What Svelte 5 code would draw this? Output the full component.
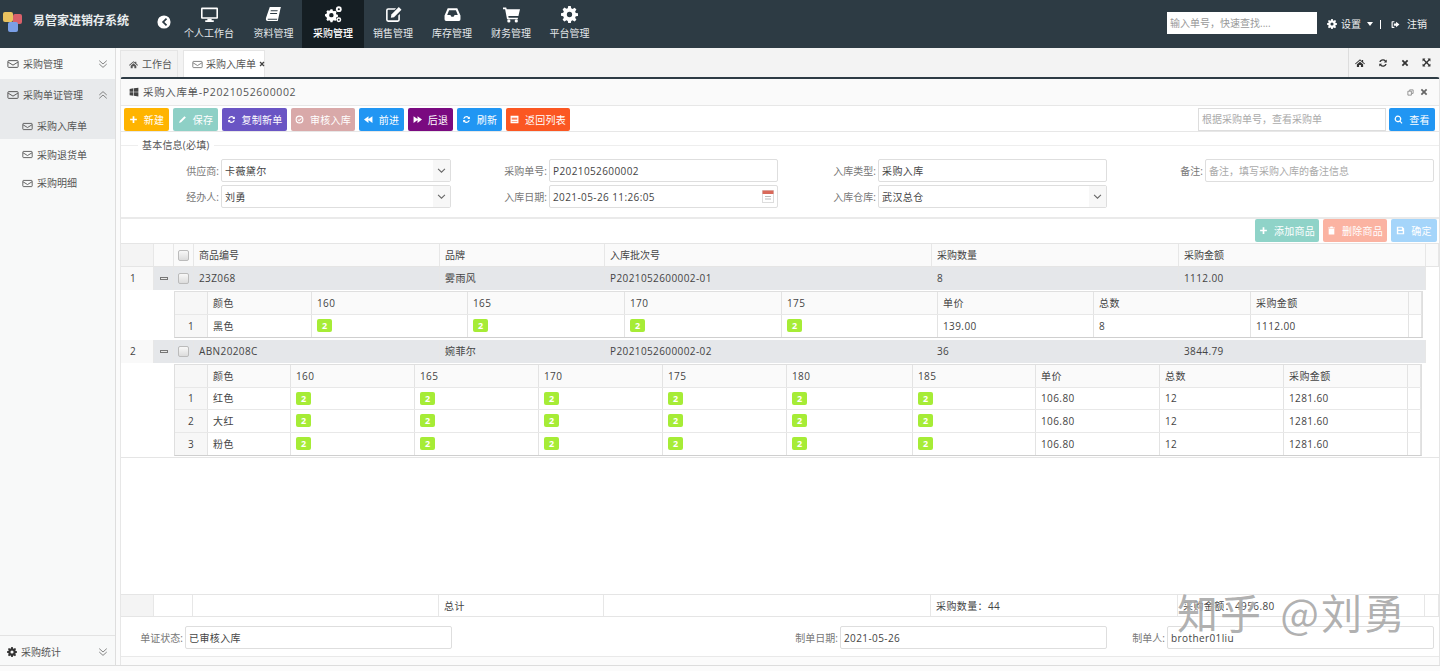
<script>
  const nav = [
    ['个人工作台','monitor'],['资料管理','book'],['采购管理','gears'],['销售管理','edit'],
    ['库存管理','inbox'],['财务管理','cart'],['平台管理','gear']
  ];
  const btns = [
    ['新建','plus','#ffb400',45],['保存','pencil','#8ed0c6',45],['复制新单','refresh','#6a55c4',65],['审核入库','check','#d9a9a9',64],
    ['前进','back','#2196f3',45],['后退','fwd','#7a0a80',45],['刷新','refresh','#2196f3',45],['返回列表','list','#fb5722',64]
  ];
  const sub1Cols = '33px 104px 156px 157px 157px 156px 156px 157px 158px 1fr';
  const sub2Cols = '33px 83px 124px 124px 124px 124px 126px 123px 124px 124px 124px 1fr';
  const sub1Sizes = ['160','165','170','175'];
  const sub2Sizes = ['160','165','170','175','180','185'];
  const sub2Rows = [['1','红色'],['2','大红'],['3','粉色']];
  const main = [
    { idx: '1', code: '23Z068', brand: '雾雨风', batch: 'P2021052600002-01', qty: '8', amt: '1112.00' },
    { idx: '2', code: 'ABN20208C', brand: '婉菲尔', batch: 'P2021052600002-02', qty: '36', amt: '3844.79' }
  ];
</script>

{#snippet icon(name, size = 12, color = 'currentColor')}
  <svg class="ic" width={size} height={size} viewBox="0 0 16 16" fill={color} stroke="none" aria-hidden="true">
    {#if name === 'monitor'}
      <path fill-rule="evenodd" d="M1 1.500h14a1 1 0 0 1 1 1v8.500a1 1 0 0 1-1 1H1a1 1 0 0 1-1-1V2.500a1 1 0 0 1 1-1zM1.500 3v7.500h13V3z"/><path d="M6 12h4v1.500h2V15H4v-1.500h2z"/>
    {:else if name === 'book'}
      <path d="M4.500 1H15l-.5 1.500-2.500 11.500H2.500C1 14 .500 12.500 1 11zM5.500 4l-.3 1h6.500l.3-1zM5 6.500l-.3 1h6.500l.3-1zM2.500 12.200c0 .5.3.800 1 .800h7.800l.3-1H3.200c-.4 0-.7 0-.7.200z" fill-rule="evenodd"/>
    {:else if name === 'gears'}
      <path fill-rule="evenodd" d="M6 3l1 .1.400 1.400 1 .5 1.300-.6 1.200 1.200-.6 1.300.5 1 1.400.4v1.800l-1.400.4-.5 1 .6 1.300-1.200 1.200-1.300-.6-1 .5-.4 1.400H5.200l-.4-1.400-1-.5-1.300.6-1.200-1.200.6-1.300-.5-1L0 9.500V7.800l1.400-.4.500-1-.6-1.300 1.200-1.200 1.300.6 1-.5L5.200 3zM6 6.500a2.100 2.100 0 1 0 0 4.200 2.100 2.100 0 0 0 0-4.200z"/><circle cx="13" cy="3" r="2.700"/><circle cx="13" cy="13" r="2.300"/><circle cx="13" cy="3" r="1" fill="#151e23"/><circle cx="13" cy="13" r=".9" fill="#151e23"/>
    {:else if name === 'edit'}
      <path d="M3 2h7.500L9 3.500H3a.6.6 0 0 0-.5.500v9a.6.6 0 0 0 .5.500h9a.6.6 0 0 0 .5-.5V9L14 7.500V13a2 2 0 0 1-2 2H3a2 2 0 0 1-2-2V4a2 2 0 0 1 2-2z"/><path d="M13 1l2.500 2.500L8.500 10.500 5.500 11l.5-3z"/>
    {:else if name === 'inbox'}
      <path fill-rule="evenodd" d="M3.500 2h9l3 7v3.500a1.500 1.500 0 0 1-1.500 1.500H2a1.500 1.500 0 0 1-1.500-1.500V9zM4.800 4L3 8.500h3l1 1.500h2l1-1.500h3L11.200 4z"/>
    {:else if name === 'cart'}
      <path d="M0 1.500h3l.5 1.500H16l-1.500 6.500H5l.3 1.500H14v1.500H3.800L2 3H0z"/><circle cx="5.500" cy="14" r="1.500"/><circle cx="12.500" cy="14" r="1.500"/>
    {:else if name === 'gear'}
      <path fill-rule="evenodd" d="M6.800 0h2.400l.4 2.200 1.300.6 1.900-1.200 1.700 1.700-1.200 1.900.6 1.300 2.100.4v2.400l-2.100.4-.6 1.300 1.200 1.900-1.700 1.700-1.900-1.200-1.300.6-.4 2.200H6.800l-.4-2.200-1.300-.6-1.900 1.200-1.700-1.700 1.200-1.900-.6-1.300L0 9.200V6.800l2.100-.4.600-1.300-1.200-1.900 1.700-1.700 1.900 1.200 1.300-.6zM8 5.500a2.500 2.500 0 1 0 0 5 2.500 2.500 0 0 0 0-5z"/>
    {:else if name === 'plus'}
      <path d="M6.500 2h3v4.500H14v3H9.500V14h-3V9.500H2v-3h4.500z"/>
    {:else if name === 'pencil'}
      <path d="M11.500 2L14 4.500 5.500 13 2 14l1-3.500z"/>
    {:else if name === 'refresh'}
      <path d="M8 2a6 6 0 0 1 4.500 2L14 2.500V7H9.500l1.500-1.500A4 4 0 0 0 4.300 6.500H2.100A6 6 0 0 1 8 2zM2 9h4.500L5 10.500a4 4 0 0 0 6.700-1h2.200A6 6 0 0 1 3.500 12L2 13.500z"/>
    {:else if name === 'check'}
      <path fill-rule="evenodd" d="M8 1a7 7 0 1 1 0 14A7 7 0 0 1 8 1zm0 2a5 5 0 1 0 0 10A5 5 0 0 0 8 3zm3 2.500l1 1L7 11 4.500 8.500l1-1L7 9z"/>
    {:else if name === 'back'}
      <path d="M8 2v5L15 2v12L8 9v5L0 8z"/>
    {:else if name === 'fwd'}
      <path d="M8 2v5L1 2v12l7-5v5l8-6z"/>
    {:else if name === 'list'}
      <path fill-rule="evenodd" d="M1 1.500h14v13H1zM3 5v1.500h10V5zm0 3v1h10V8zm0 2.500v1h10v-1z"/>
    {:else if name === 'mail'}
      <path fill="none" stroke={color} stroke-width="1.300" d="M2.200 3.500h11.600a1 1 0 0 1 1 1v7a1 1 0 0 1-1 1H2.200a1 1 0 0 1-1-1v-7a1 1 0 0 1 1-1zM1.500 5.500L8 9.500l6.500-4"/>
    {:else if name === 'home'}
      <path d="M8 2l3 2.600V3h2v3.300L16 9l-1 1-7-6-7 6-1-1zM3 10l5-4.200L13 10v4.500H9.500V11h-3v3.500H3z"/>
    {:else if name === 'close'}
      <path d="M4 1.500L8 5.500l4-4L14.500 4l-4 4 4 4-2.500 2.500-4-4-4 4L1.500 12l4-4-4-4z"/>
    {:else if name === 'expand'}
      <path d="M1 1h5L4.600 2.900 8 6.100l3.400-3.200L10 1h5v5l-1.900-1.400L9.900 8l3.200 3.400L15 10v5h-5l1.400-1.900L8 9.900l-3.400 3.200L6 15H1v-5l1.900 1.400L6.100 8 2.900 4.600 1 6z"/>
    {:else if name === 'windows'}
      <path d="M1 3l6-.9V7.500H1zM8 2l7-1v6.500H8zM1 8.500h6V14l-6-.9zM8 8.500h7V15l-7-1z"/>
    {:else if name === 'restore'}
      <path fill="none" stroke={color} stroke-width="1.500" d="M6 4V2h8v8h-3M2 5h8v9H2z"/>
    {:else if name === 'search'}
      <path fill-rule="evenodd" d="M7 1a6 6 0 0 1 4.700 9.700l3.300 3.300-1.400 1.400-3.300-3.300A6 6 0 1 1 7 1zm0 2.200a3.800 3.800 0 1 0 0 7.600 3.800 3.800 0 0 0 0-7.600z"/>
    {:else if name === 'logout'}
      <path d="M6 2H2a1 1 0 0 0-1 1v10a1 1 0 0 0 1 1h4v-2H3V4h3z"/><path d="M9 3l6 5-6 5v-3H5V6h4z"/>
    {:else if name === 'trash'}
      <path d="M6 1h4l.5 1.500H14V4H2V2.500h3.500zM3 5h10v10H3z"/>
    {:else if name === 'save'}
      <path fill-rule="evenodd" d="M1.500 1.500h10l3 3v10h-13zM4 3v3.500h6.500V3zm0 6v4h8V9z"/>
    {:else if name === 'left'}
      <path fill-rule="evenodd" d="M8 .5a7.500 7.500 0 1 1 0 15 7.500 7.500 0 0 1 0-15zM10.200 3.400L5.600 8l4.600 4.600 1.400-1.400L8.400 8l3.200-3.200-1.400-1.400z"/>
    {:else if name === 'dchev'}
      <path fill="none" stroke={color} stroke-width="1.200" d="M3 3.500l5 4.500 5-4.500M3 8l5 4.500 5-4.500"/>
    {:else if name === 'uchev'}
      <path fill="none" stroke={color} stroke-width="1.200" d="M3 8l5-4.500L13 8M3 12.500L8 8l5 4.500"/>
    {:else if name === 'chev'}
      <path fill="none" stroke={color} stroke-width="1.500" d="M3 5.500l5 5 5-5"/>
    {/if}
  </svg>
{/snippet}

{#snippet badge()}<span class="badge">2</span>{/snippet}

<div class="page">
  <header class="top">
    <div class="brand">
      <svg class="logo" width="20" height="20" viewBox="0 0 20 20" aria-hidden="true">
        <rect x="0" y="0" width="10" height="10" rx="2" fill="#e9c25f"/>
        <rect x="10" y="2" width="9" height="10" rx="2" fill="#d9606a"/>
        <rect x="5" y="10" width="10" height="10" rx="2" fill="#7a9fe6"/>
      </svg>
      <span class="brand-name">易管家进销存系统</span>
    </div>
    <span class="collapse">{@render icon('left', 14, '#fff')}</span>
    <nav class="nav">
      {#each nav as [label, ic], i}
        <div class="nav-item" class:active={i === 2}>
          {@render icon(ic, 17, '#fff')}
          <span>{label}</span>
        </div>
      {/each}
    </nav>
    <div class="top-right">
      <div class="quick">输入单号，快速查找....</div>
      {@render icon('gear', 10, '#fff')}<span class="tr-t">设置</span><span class="caret"></span><span class="bar"></span>
      {@render icon('logout', 9, '#fff')}<span class="tr-t out">注销</span>
    </div>
  </header>

  <div class="body">
    <aside class="side">
      <div class="s-row s-head">{@render icon('mail', 12, '#555')}<span>采购管理</span>{@render icon('dchev', 12, '#777')}</div>
      <div class="s-row s-head open">{@render icon('mail', 12, '#555')}<span>采购单证管理</span>{@render icon('uchev', 12, '#777')}</div>
      <div class="s-row s-sub open">{@render icon('mail', 11, '#555')}<span>采购入库单</span></div>
      <div class="s-row s-sub">{@render icon('mail', 11, '#555')}<span>采购退货单</span></div>
      <div class="s-row s-sub">{@render icon('mail', 11, '#555')}<span>采购明细</span></div>
      <div class="s-row s-head s-bottom">{@render icon('gear', 10, '#333')}<span>采购统计</span>{@render icon('dchev', 12, '#777')}</div>
    </aside>

    <main class="content">
      <div class="tabs">
        <div class="tab">{@render icon('home', 9, '#555')}<span>工作台</span></div>
        <div class="tab cur">{@render icon('mail', 11, '#777')}<span>采购入库单</span>{@render icon('close', 6, '#444')}</div>
        <div class="tab-tools">
          {@render icon('home', 10, '#333')}{@render icon('refresh', 10, '#333')}{@render icon('close', 8, '#333')}{@render icon('expand', 9, '#333')}
        </div>
      </div>

      <section class="panel">
        <div class="p-title">
          {@render icon('windows', 10, '#444')}<span>采购入库单-P2021052600002</span>
          <div class="p-tools">{@render icon('restore', 7, '#666')}{@render icon('close', 8, '#666')}</div>
        </div>

        <div class="toolbar">
          {#each btns as [label, ic, bg, w]}
            <div class="btn" style="background:{bg};width:{w}px">{@render icon(ic, 9, '#fff')}<span>{label}</span></div>
          {/each}
          <div class="search">
            <div class="search-in">根据采购单号，查看采购单</div>
            <div class="btn find">{@render icon('search', 9, '#fff')}<span>查看</span></div>
          </div>
        </div>

        <div class="legend"><span>基本信息(必填)</span></div>

        <div class="form">
          <label class="lbl">供应商:</label><div class="in sel">卡薇黛尔<i>{@render icon('chev', 11, '#666')}</i></div>
          <label class="lbl">采购单号:</label><div class="in">P2021052600002</div>
          <label class="lbl">入库类型:</label><div class="in">采购入库</div>
          <label class="lbl">备注:</label><div class="in ph">备注，填写采购入库的备注信息</div>

          <label class="lbl">经办人:</label><div class="in sel">刘勇<i>{@render icon('chev', 11, '#666')}</i></div>
          <label class="lbl">入库日期:</label>
          <div class="in date">2021-05-26 11:26:05
            <svg width="12" height="14" viewBox="0 0 12 14" aria-hidden="true"><rect x=".5" y="1.500" width="11" height="12" fill="#fff" stroke="#ddd"/><rect x=".5" y="1.500" width="11" height="3.500" fill="#d9695a"/><path d="M3 7.500h6M3 10h6" stroke="#bbb"/></svg>
          </div>
          <label class="lbl">入库仓库:</label><div class="in sel">武汉总仓<i>{@render icon('chev', 11, '#666')}</i></div>
        </div>

        <div class="actions">
          <div class="btn" style="background:#8fd3c8;width:64px">{@render icon('plus', 9, '#fff')}<span>添加商品</span></div>
          <div class="btn" style="background:#fbb3a2;width:64px">{@render icon('trash', 9, '#fff')}<span>删除商品</span></div>
          <div class="btn" style="background:#a5d5fa;width:46px">{@render icon('save', 9, '#fff')}<span>确定</span></div>
        </div>

        <div class="grid">
          <div class="row head">
            <div class="c gray"></div><div class="c"></div><div class="c ctr"><span class="chk"></span></div>
            <div class="c">商品编号</div><div class="c">品牌</div><div class="c">入库批次号</div><div class="c">采购数量</div><div class="c">采购金额</div><div class="c"></div>
          </div>

          {#each main as m, i}
            <div class="row item">
              <div class="c idx">{m.idx}</div><div class="c ctr"><span class="minus"></span></div><div class="c ctr"><span class="chk"></span></div>
              <div class="c">{m.code}</div><div class="c">{m.brand}</div><div class="c">{m.batch}</div><div class="c">{m.qty}</div><div class="c">{m.amt}</div><div class="c tail"></div>
            </div>
            {#if i === 0}
              <div class="detail first">
                <div class="sub">
                  <div class="s-line s-h" style="grid-template-columns:{sub1Cols}">
                    <div class="d no"></div><div class="d">颜色</div>
                    {#each sub1Sizes as s}<div class="d">{s}</div>{/each}
                    <div class="d">单价</div><div class="d">总数</div><div class="d">采购金额</div><div class="d"></div>
                  </div>
                  <div class="s-line" style="grid-template-columns:{sub1Cols}">
                    <div class="d no r">1</div><div class="d">黑色</div>
                    {#each sub1Sizes as s}<div class="d">{@render badge()}</div>{/each}
                    <div class="d">139.00</div><div class="d">8</div><div class="d">1112.00</div><div class="d"></div>
                  </div>
                </div>
              </div>
            {:else}
              <div class="detail second">
                <div class="sub">
                  <div class="s-line s-h" style="grid-template-columns:{sub2Cols}">
                    <div class="d no"></div><div class="d">颜色</div>
                    {#each sub2Sizes as s}<div class="d">{s}</div>{/each}
                    <div class="d">单价</div><div class="d">总数</div><div class="d">采购金额</div><div class="d"></div>
                  </div>
                  {#each sub2Rows as [n, color]}
                    <div class="s-line" style="grid-template-columns:{sub2Cols}">
                      <div class="d no r">{n}</div><div class="d">{color}</div>
                      {#each sub2Sizes as s}<div class="d">{@render badge()}</div>{/each}
                      <div class="d">106.80</div><div class="d">12</div><div class="d">1281.60</div><div class="d"></div>
                    </div>
                  {/each}
                </div>
              </div>
            {/if}
          {/each}

          <div class="spacer"></div>

          <div class="row foot">
            <div class="c gray"></div><div class="c"></div>
            <div class="c"></div><div class="c">总计</div><div class="c"></div><div class="c">采购数量：44</div><div class="c">采购金额：4956.80</div><div class="c"></div>
          </div>
        </div>

        <div class="bottom">
          <label class="lbl">单证状态:</label><div class="in">已审核入库</div>
          <label class="lbl">制单日期:</label><div class="in">2021-05-26</div>
          <label class="lbl">制单人:</label><div class="in">brother01liu</div>
        </div>
        <div class="strip"></div>
      </section>
    </main>
  </div>

  <div class="mark">知乎 @刘勇</div>
</div>

<style>
  :global(body) { margin: 0; background: #fbfbfb; }
  .page {
    position: relative; width: 1440px; height: 671px; overflow: hidden; display: flex; flex-direction: column;
    font: 10px/1.2 "Open Sans", "Noto Sans CJK SC", sans-serif; color: #555; letter-spacing: 0;
  }
  .ic { display: block; flex: none; }

  .top { height: 48px; flex: none; background: #2d3b44; display: flex; align-items: stretch; color: #fff; }
  .brand { width: 157px; flex: none; display: flex; align-items: center; gap: 10px; padding-left: 3px; box-sizing: border-box; padding-bottom: 5px; }
  .logo { flex: none; }
  .brand-name { font-size: 12px; font-weight: 700; color: #e9edef; white-space: nowrap; }
  .collapse { width: 18px; flex: none; display: flex; align-items: center; padding-bottom: 5px; }
  .nav { display: flex; }
  .nav-item { width: 50px; display: flex; flex-direction: column; align-items: center; gap: 4px; padding-top: 6px; box-sizing: border-box; color: #e4e8ea; white-space: nowrap; margin-left: 9px; }
  .nav-item:nth-child(1) { width: 68px; margin-left: 0; }
  .nav-item:nth-child(2) { margin-left: 5.500px; }
  .nav-item:nth-child(3) { width: 62px; margin-left: 3.500px; }
  .nav-item:nth-child(4) { margin-left: 4px; }
  .nav-item:nth-child(7) { margin-left: 8.500px; }
  .nav-item.active { background: #151e23; color: #fff; font-weight: 500; }
  .top-right { margin-left: auto; display: flex; align-items: center; padding-right: 13px; }
  .quick { width: 150px; height: 22px; margin: -2px 10px 0 0; box-sizing: border-box; background: #fff; color: #999; padding: 4px 3px; line-height: 14px; }
  .tr-t { margin-left: 4px; color: #f0f0f0; }
  .tr-t.out { margin-left: 7px; }
  .caret { border-top: 4px solid #fff; border-left: 3.500px solid transparent; border-right: 3.500px solid transparent; margin: 0 7px 0 6px; }
  .bar { width: 1px; height: 9px; background: #fff; margin-right: 10px; }

  .body { height: 617px; flex: none; display: flex; min-height: 0; border-bottom: 1px solid #ddd; }
  .side { width: 115px; flex: none; background: #f8f9f9; border-right: 1px solid #dedede; display: flex; flex-direction: column; }
  .s-row { display: flex; align-items: center; color: #555; white-space: nowrap; box-sizing: border-box; }
  .s-head { height: 31px; padding: 0 6px 0 7px; gap: 4px; flex: none; }
  .s-head span { flex: 1; }
  .s-sub { height: 29px; padding-left: 22px; gap: 4px; flex: none; }
  .s-row.s-sub:nth-child(3) { padding-top: 3px; }
  .s-row.s-sub:nth-child(4) { padding-top: 2px; }
  .s-row.s-sub:nth-child(5) { padding-top: 1px; }
  .open { background: #e8eaec; }
  .s-bottom { margin-top: auto; height: 30px; border-top: 1px solid #e3e3e3; padding-top: 3px; }

  .content { flex: 1; min-width: 0; margin-left: 4px; display: flex; flex-direction: column; background: #f3f3f4; }
  .tabs { height: 29px; flex: none; display: flex; align-items: flex-end; background: #f3f3f3; gap: 5px; position: relative; }
  .tab { width: 58px; height: 27px; box-sizing: border-box; display: flex; align-items: center; gap: 4px; padding: 0 8px; border: 1px solid #e5e5e5; border-bottom: 0; white-space: nowrap; }
  .tab.cur { width: 82px; background: #fff; gap: 3px; }
  .tab-tools { margin-left: auto; height: 29px; width: 92px; box-sizing: border-box; border-left: 1px solid #ddd; display: flex; align-items: center; gap: 13px; padding-left: 6px; }

  .panel { flex: 1; min-height: 0; background: #fff; border-top: 2px solid #2d3b44; border-radius: 3px 3px 0 0; display: flex; flex-direction: column; border-right: 1px solid #e5e5e5; border-left: 1px solid #e7e7e7; }
  .p-title { height: 27px; flex: none; box-sizing: border-box; display: flex; align-items: center; gap: 4px; padding: 0 11px 0 8px; background: #fafafa; border-bottom: 1px solid #e7e7e7; font-size: 10.500px; letter-spacing: .65px; }
  .p-tools { margin-left: auto; display: flex; gap: 6px; align-items: center; }
  .toolbar { height: 26px; flex: none; box-sizing: border-box; display: flex; align-items: center; gap: 4px; padding: 2px 4px 0 3px; border-bottom: 1px solid #e7e7e7; }
  .btn { height: 23px; flex: none; border-radius: 2px; box-sizing: border-box; color: #fff; display: flex; align-items: center; justify-content: center; gap: 6px; white-space: nowrap; letter-spacing: .2px; }
  .search { margin-left: auto; display: flex; gap: 3px; }
  .search-in { width: 188px; height: 23px; box-sizing: border-box; border: 1px solid #ddd; color: #aaa; padding: 4px 3px; }
  .find { width: 46px; background: #2196f3; }

  .legend { height: 24px; flex: none; box-sizing: border-box; padding: 2px 0 0 17px; position: relative; display: flex; align-items: center; }
  .legend::before { content: ""; position: absolute; left: 0; right: 0; top: 13px; border-top: 1px solid #eee; }
  .legend span { position: relative; background: #fff; padding: 0 4px; letter-spacing: .2px; }

  .form { height: 53px; margin: 3px 0 5px; flex: none; display: grid; grid-template-columns: 100px 230px 98px 229px 100px 229px 98px 229px; grid-auto-rows: 23px; row-gap: 3px; align-items: center; }
  .lbl { text-align: right; color: #777; padding-right: 2px; white-space: nowrap; }
  .in { height: 23px; box-sizing: border-box; border: 1px solid #dedede; border-radius: 2px; background: #fff; color: #444; padding: 0 3px; display: flex; align-items: center; white-space: nowrap; position: relative; letter-spacing: .4px; }
  .sel i { position: absolute; right: 0; top: 0; bottom: 0; width: 17px; background: #f7f7f7; display: flex; align-items: center; justify-content: center; }
  .date svg { position: absolute; right: 3px; top: 3px; }
  .ph { color: #aaa; letter-spacing: 0; }

  .actions { height: 26px; flex: none; box-sizing: border-box; display: flex; justify-content: flex-end; gap: 4px; align-items: flex-start; padding-right: 2px; border-top: 2px solid #eaeaea; }
  .grid { flex: 1; min-height: 0; display: flex; flex-direction: column; border-top: 1px solid #e5e5e5; }
  .row { display: grid; grid-template-columns: 33px 20px 20px 246px 165px 327px 247px 247px 1fr; flex: none; height: 23px; box-sizing: border-box; }
  .c { display: flex; align-items: center; padding-left: 5px; border-right: 1px solid #e7e7e7; white-space: nowrap; color: #444; min-width: 0; letter-spacing: .4px; }
  .ctr { justify-content: center; padding: 0; }
  .head { background: #fafafa; border-bottom: 1px solid #e5e5e5; }
  .head .c { letter-spacing: 0; }
  .gray { background: #f4f4f4; }
  .item { background: #e5e7ea; }
  .item .c { padding-bottom: 1px; }
  .item .tail { border-right: 0; background: #fff; }
  .idx { background: #f9f9f9; justify-content: center; padding: 0 8px 0 0; }
  .chk { width: 9px; height: 9px; border: 1px solid #bbb; border-radius: 2px; background: linear-gradient(#f8f8f8, #dcdcdc); }
  .minus { width: 8px; height: 3px; border: 1px solid #777; box-sizing: border-box; background: #e8e8e8; }

  .detail { flex: none; box-sizing: border-box; background: #fff; padding-left: 53px; }
  .detail.first { padding-top: 1px; padding-bottom: 2px; }
  .detail.second { padding-top: 1px; padding-bottom: 1px; border-bottom: 1px solid #e5e5e5; }
  .sub { width: 1249px; border: 1px solid #dfdfdf; border-bottom-color: #cfcfcf; box-sizing: border-box; }
  .second .sub { width: 1248px; }
  .s-line { display: grid; height: 22.500px; box-sizing: border-box; border-bottom: 1px solid #e8e8e8; }
  .s-line:last-child { border-bottom: 0; }
  .s-h { background: #fafafa; }
  .d { display: flex; align-items: center; padding-left: 5px; border-right: 1px solid #e3e3e3; white-space: nowrap; color: #444; min-width: 0; letter-spacing: .4px; }
  .no { background: #f7f7f7; padding-left: 0; }
  .no.r { justify-content: center; }
  .badge { display: inline-block; background: #a6ec36; color: #fff; font-weight: 700; font-size: 9px; line-height: 13px; height: 13px; width: 15px; text-align: center; border-radius: 2px; letter-spacing: 0; }

  .spacer { flex: 1; min-height: 0; }
  .foot { grid-template-columns: 33px 39px 246px 165px 327px 247px 247px 1fr; border-top: 1px solid #e5e5e5; border-bottom: 1px solid #e5e5e5; }
  .bottom { height: 40px; flex: none; box-sizing: border-box; display: grid; grid-template-columns: 64px 267px 388px 267px 60px 267px; align-items: center; padding: 9px 0 7px; border-bottom: 1px solid #e9e9e9; background: #fff; }
  .strip { height: 8px; flex: none; background: #fbfbfb; }

  .mark { position: absolute; left: 1177px; top: 587px; font: 400 41px/1.2 "Noto Sans CJK SC", sans-serif; color: rgba(125,125,125,.6); letter-spacing: 2px; word-spacing: 6px; pointer-events: none; white-space: nowrap; text-shadow: 0 0 2px rgba(255,255,255,.9); }
</style>
